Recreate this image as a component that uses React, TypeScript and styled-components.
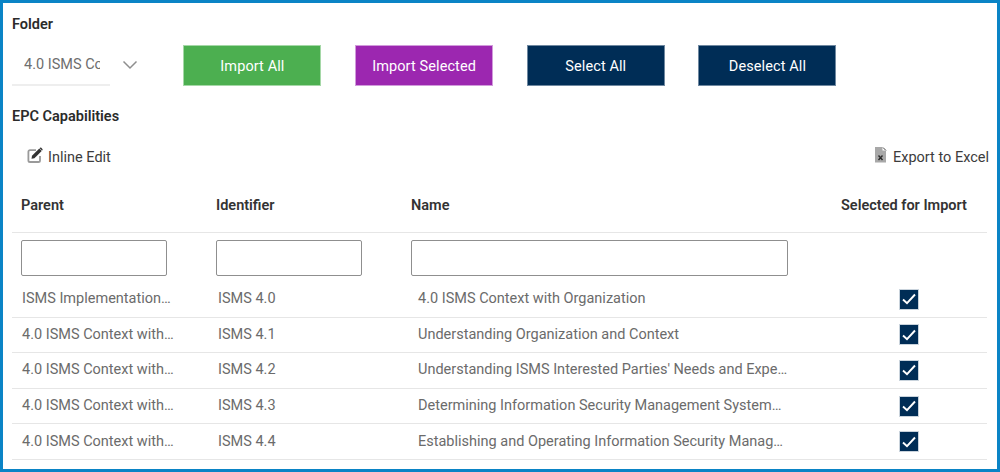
import React from "react";
import styled, { createGlobalStyle } from "styled-components";

const Global = createGlobalStyle`
  html, body { margin: 0; padding: 0; background: #fff; }
  body { font-family: Roboto, "Liberation Sans", sans-serif; font-size: 14.5px; color: #333; }
  * { box-sizing: border-box; }
`;

const Frame = styled.div`
  width: 1000px;
  height: 472px;
  border: 3px solid #0a84c6;
  padding: 0 9px;
  overflow: hidden;
`;
const SectionLabel = styled.div<{ $top: number; $bottom: number }>`
  font-weight: 600;
  line-height: 18px;
  color: #2b2b2b;
  margin-top: ${(p) => p.$top}px;
  margin-bottom: ${(p) => p.$bottom}px;
`;
const ControlRow = styled.div`
  display: flex;
  height: 41px;
`;
const Select = styled.div`
  width: 98px;
  height: 41px;
  border-bottom: 2px solid #eeeeee;
  padding: 11px 0 0 12px;
  color: #6e6e6e;
  line-height: 18px;
`;
const SelectText = styled.div`
  width: 76px;
  overflow: hidden;
  white-space: nowrap;
`;
const Chevron = styled.svg`
  width: 16px;
  height: 10px;
  margin: 15px 0 0 12px;
  flex: none;
`;
const Buttons = styled.div`
  display: flex;
  gap: 33.7px;
  margin-left: 45.4px;
`;
const ActionButton = styled.button<{ $bg: string; $edge: string }>`
  width: 138px;
  height: 41px;
  padding: 2px 0 0;
  font: 400 14.5px/18px Roboto, sans-serif;
  letter-spacing: 0.1px;
  color: #fff;
  background: ${(p) => p.$bg};
  border: 1px solid ${(p) => p.$edge};
`;
const Toolbar = styled.div`
  display: flex;
  justify-content: space-between;
  height: 24px;
  align-items: center;
  margin-top: 20px;
  padding-left: 15px;
`;
const ToolItem = styled.div`
  display: flex;
  align-items: center;
  color: #3c3c3c;
  line-height: 18px;
  margin-right: -1px;
`;
const ToolIcon = styled.svg<{ $gap: number }>`
  width: 16px;
  height: 16px;
  margin-right: ${(p) => p.$gap}px;
  margin-top: -6px;
`;
const Grid = styled.div`
  width: 975px;
  margin-top: 15px;
`;
const Row = styled.div<{ $height: number; $line?: boolean }>`
  display: grid;
  grid-template-columns: 195px 195px 1fr 190px;
  height: ${(p) => p.$height}px;
  align-items: center;
  border-bottom: ${(p) => (p.$line ? "1.5px solid #e6e6e6" : "none")};
`;
const HeadRow = styled(Row)`
  align-items: start;
  padding-top: 12px;
`;
const HeadCell = styled.div<{ $right?: boolean }>`
  font-weight: 600;
  line-height: 18px;
  color: #333;
  padding-left: ${(p) => (p.$right ? "44px" : "9px")};
  white-space: nowrap;
`;
const FilterCell = styled.div`
  padding-left: 9px;
  display: flex;
`;
const FilterInput = styled.input<{ $w: number }>`
  width: ${(p) => p.$w}px;
  height: 36px;
  border: 1px solid #8f8f8f;
  border-radius: 2px;
  background: #fff;
  outline: none;
`;
const Cell = styled.div<{ $pad: number }>`
  padding-left: ${(p) => p.$pad}px;
  color: #6b6b6b;
  line-height: 18px;
  white-space: nowrap;
`;
const CheckCell = styled.div`
  padding-left: 102px;
  display: flex;
`;
const CheckBox = styled.div`
  width: 20px;
  height: 21px;
  background: #002d56;
  border: 1px solid #c9d3dc;
  display: flex;
  align-items: center;
  justify-content: center;
`;

const rows = [
  ["ISMS Implementation…", "ISMS 4.0", "4.0 ISMS Context with Organization"],
  ["4.0 ISMS Context with…", "ISMS 4.1", "Understanding Organization and Context"],
  ["4.0 ISMS Context with…", "ISMS 4.2", "Understanding ISMS Interested Parties' Needs and Expe…"],
  ["4.0 ISMS Context with…", "ISMS 4.3", "Determining Information Security Management System…"],
  ["4.0 ISMS Context with…", "ISMS 4.4", "Establishing and Operating Information Security Manag…"],
];

export default function App() {
  return (
    <>
      <Global />
      <Frame>
        <SectionLabel $top={13} $bottom={11}>Folder</SectionLabel>
        <ControlRow>
          <Select>
            <SelectText>4.0 ISMS Context</SelectText>
          </Select>
          <Chevron viewBox="0 0 16 10" fill="none" stroke="#8e8e8e" strokeWidth="1.5">
            <path d="M1.5 1.5 L8 8 L14.5 1.5" />
          </Chevron>
          <Buttons>
            <ActionButton $bg="#4caf50" $edge="#a5d8a7">Import All</ActionButton>
            <ActionButton $bg="#9c27b0" $edge="#d19bdb">Import Selected</ActionButton>
            <ActionButton $bg="#002d56" $edge="#6f88a0">Select All</ActionButton>
            <ActionButton $bg="#002d56" $edge="#6f88a0">Deselect All</ActionButton>
          </Buttons>
        </ControlRow>
        <SectionLabel $top={22} $bottom={0}>EPC Capabilities</SectionLabel>
        <Toolbar>
          <ToolItem>
            <ToolIcon $gap={5} viewBox="0 0 16 16">
              <path d="M9 3.2H3a1.6 1.6 0 0 0-1.6 1.6v8.6A1.6 1.6 0 0 0 3 15h8.4a1.6 1.6 0 0 0 1.6-1.6V9" fill="none" stroke="#9a9a9a" strokeWidth="1.8" />
              <path d="M5 8.8 12.3 1.5l2.4 2.4-7.3 7.3-2.9.5z" fill="#333" />
              <path d="M13 .8a1 1 0 0 1 1.3 0l1.1 1.1a1 1 0 0 1 0 1.3l-.4.4L12.6 1.2z" fill="#333" />
            </ToolIcon>
            Inline Edit
          </ToolItem>
          <ToolItem>
            <ToolIcon $gap={4} viewBox="0 0 16 16">
              <path d="M2 0H9l1 1v1.5h1.5L13 4v11.5H2z" fill="#a8a8a8" />
              <path d="M9.5 0 13 3.5H9.5z" fill="#fff" />
              <path d="M10 0.5 13 3.5" stroke="#444" strokeWidth="1" />
              <path d="M5.5 8.5 9.5 13M9.5 8.5 5.5 13" stroke="#2b2b2b" strokeWidth="1.4" />
            </ToolIcon>
            Export to Excel
          </ToolItem>
        </Toolbar>
        <Grid>
          <HeadRow $height={48} $line>
            <HeadCell>Parent</HeadCell>
            <HeadCell>Identifier</HeadCell>
            <HeadCell>Name</HeadCell>
            <HeadCell $right>Selected for Import</HeadCell>
          </HeadRow>
          <Row $height={49}>
            <FilterCell><FilterInput $w={146} /></FilterCell>
            <FilterCell><FilterInput $w={146} /></FilterCell>
            <FilterCell><FilterInput $w={377} /></FilterCell>
            <div />
          </Row>
          {rows.map(([parent, id, name]) => (
            <Row key={id} $height={35.6} $line>
              <Cell $pad={10}>{parent}</Cell>
              <Cell $pad={11}>{id}</Cell>
              <Cell $pad={16}>{name}</Cell>
              <CheckCell>
                <CheckBox>
                  <svg width="14" height="12" viewBox="0 0 14 12" fill="none" stroke="#fff" strokeWidth="1.9">
                    <path d="M1 6.5 5 10.2 13 1.5" />
                  </svg>
                </CheckBox>
              </CheckCell>
            </Row>
          ))}
        </Grid>
      </Frame>
    </>
  );
}
